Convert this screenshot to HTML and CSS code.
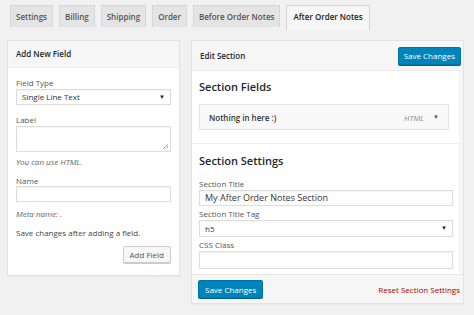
FILE: index.html
```html
<!DOCTYPE html>
<html lang="en">
<head>
  <meta charset="UTF-8" />
  <title>After Order Notes</title>
  <link rel="stylesheet" href="styles.css">
</head>
<body>
  <div class="tabs">
    <div class="tab">Settings</div>
    <div class="tab">Billing</div>
    <div class="tab">Shipping</div>
    <div class="tab">Order</div>
    <div class="tab">Before Order Notes</div>
    <div class="tab active">After Order Notes</div>
  </div>

  <div class="container">
    <div class="left-panel">
      <div class="panel-head">Add New Field</div>
      <div class="panel-body">
        <label class="lbl lbl-first">Field Type</label>
        <div class="select">Single Line Text<span class="arrow">▼</span></div>
        <label class="lbl lbl-gap">Label</label>
        <div class="textarea"><span class="grip"></span></div>
        <div class="note">You can use HTML.</div>
        <label class="lbl lbl-name">Name</label>
        <div class="input"></div>
        <div class="note meta">Meta name: .</div>
        <div class="hint">Save changes after adding a field.</div>
        <div class="btn-row"><button class="btn">Add Field</button></div>
      </div>
    </div>

    <div class="right-panel">
      <div class="panel-head split">
        <span>Edit Section</span>
        <button class="btn-primary">Save Changes</button>
      </div>
      <div class="scroll">
        <div class="scroll-inner">
          <div class="section">
            <h3>Section Fields</h3>
            <div class="field-row">
              <span class="field-name">Nothing in here :)</span>
              <span class="field-type">HTML</span>
              <span class="field-arrow">▼</span>
            </div>
          </div>
          <div class="section settings">
            <h3>Section Settings</h3>
            <label class="lbl">Section Title</label>
            <div class="input filled">My After Order Notes Section</div>
            <label class="lbl">Section Title Tag</label>
            <div class="select">h5<span class="arrow">▼</span></div>
            <label class="lbl">CSS Class</label>
            <div class="input tall"></div>
          </div>
        </div>
      </div>
      <div class="panel-foot">
        <button class="btn-primary big">Save Changes</button>
        <a class="reset">Reset Section Settings</a>
      </div>
    </div>
  </div>
</body>
</html>
```

FILE: styles.css
```css
body {
  font-family: 'Open Sans', 'Noto Sans', sans-serif;
  font-size: 8px;
  color: #444;
  margin: 0;
  background: #f1f1f1;
  width: 474px;
  height: 315px;
  overflow: hidden;
}

.tabs {
  display: flex;
  gap: 6px;
  padding: 5px 0 0 10px;
  height: 22px;
}

.tab {
  background: #e4e4e4;
  border: 1px solid #d6d6d6;
  border-bottom: none;
  color: #555;
  font-weight: 600;
  font-size: 8px;
  padding: 0 5px;
  line-height: 21px;
}

.tab.active {
  background: #f6f6f6;
  color: #222;
  height: 24px;
  padding: 0 6px;
}

.container {
  display: flex;
  gap: 11px;
  padding: 13px 0 0 7px;
}

.left-panel {
  width: 171px;
  height: 234px;
  background: #fff;
  border: 1px solid #e3e3e3;
  box-shadow: 0 1px 1px rgba(0,0,0,0.03);
}

.panel-head {
  background: #f6f6f6;
  border-bottom: 1px solid #ececec;
  height: 26px;
  line-height: 26px;
  padding-left: 8px;
  font-weight: 600;
  color: #23282d;
}

.panel-body {
  padding: 0 8px;
}

.lbl {
  display: block;
  color: #555;
  line-height: 10px;
  margin-top: 0;
  margin-bottom: 1px;
}

.lbl-first {
  margin-top: 10px;
}

.lbl-gap {
  margin-top: 10px;
}

.lbl-name {
  margin-top: 9px;
  margin-bottom: 0;
}

.select, .input, .textarea {
  border: 1px solid #ddd;
  box-shadow: inset 0 1px 2px rgba(0,0,0,0.05);
  background: #fff;
  height: 14px;
  line-height: 14px;
  padding: 0 5px;
  color: #333;
  position: relative;
  font-size: 8px;
}

.arrow {
  position: absolute;
  right: 5px;
  top: 0;
  font-size: 6px;
  color: #222;
}

.textarea {
  height: 24px;
}

.grip {
  position: absolute;
  right: 2px;
  bottom: 2px;
  width: 5px;
  height: 5px;
  background: linear-gradient(135deg, transparent 45%, #aaa 45%, #aaa 55%, transparent 55%, transparent 70%, #aaa 70%, #aaa 80%, transparent 80%);
}

.note {
  font-style: italic;
  color: #666;
  margin-top: 5px;
  line-height: 10px;
}

.note.meta {
  margin-top: 7px;
}

.hint {
  margin-top: 9px;
  line-height: 10px;
  color: #444;
}

.btn-row {
  display: flex;
  justify-content: flex-end;
  margin-top: 8px;
}

.btn {
  font-family: inherit;
  font-size: 8px;
  color: #555;
  background: #f7f7f7;
  border: 1px solid #ccc;
  box-shadow: 0 1px 0 #ccc;
  border-radius: 2px;
  height: 17px;
  padding: 0 6px;
}

.right-panel {
  width: 271px;
  height: 262px;
  background: #f6f6f6;
  border: 1px solid #e3e3e3;
  box-shadow: 0 1px 1px rgba(0,0,0,0.03);
  display: flex;
  flex-direction: column;
}

.panel-head.split {
  display: flex;
  justify-content: space-between;
  align-items: center;
  height: 29px;
  padding-right: 2px;
  border-bottom: none;
}

.btn-primary {
  font-family: inherit;
  font-size: 8px;
  color: #fff;
  background: #0085ba;
  border: 1px solid #0073aa;
  border-radius: 2px;
  box-shadow: 0 1px 0 #006799;
  height: 18px;
  padding: 0 5px;
}

.btn-primary.big {
  height: 18px;
  padding: 0 6px;
}

.scroll {
  padding-right: 4px;
  border-top: 1px solid #ececec;
  border-bottom: 1px solid #e6e6e6;
}

.scroll-inner {
  background: #fff;
}

.section {
  padding: 8px 6px 13px 7px;
}

.section h3 {
  margin: 0 0 9px 0;
  font-size: 11px;
  font-weight: 600;
  color: #23282d;
  line-height: 16px;
}

.field-row {
  display: flex;
  align-items: center;
  background: #f9f9f9;
  border: 1px solid #e5e5e5;
  height: 24px;
  padding: 0 9px;
  margin-right: 4px;
}

.field-name {
  flex: 1;
  font-weight: 600;
  color: #333;
}

.field-type {
  font-style: italic;
  color: #888;
  margin-right: 9px;
}

.field-arrow {
  font-size: 6px;
  color: #555;
}

.settings {
  border-top: 1px solid #eee;
  padding-top: 9px;
  padding-bottom: 5px;
}

.settings h3 {
  margin-bottom: 10px;
}

.settings .lbl {
  margin-top: 3px;
  margin-bottom: 1px;
}

.settings .input {
  height: 14px;
}

.settings .select {
  height: 15px;
  line-height: 15px;
}

.input.filled {
  font-size: 9px;
}

.input.tall {
  height: 16px;
}

.panel-foot {
  flex: 1;
  display: flex;
  align-items: center;
  justify-content: space-between;
  padding: 0 3px 0 6px;
}

.reset {
  color: #a00;
  font-size: 8px;
}
```
